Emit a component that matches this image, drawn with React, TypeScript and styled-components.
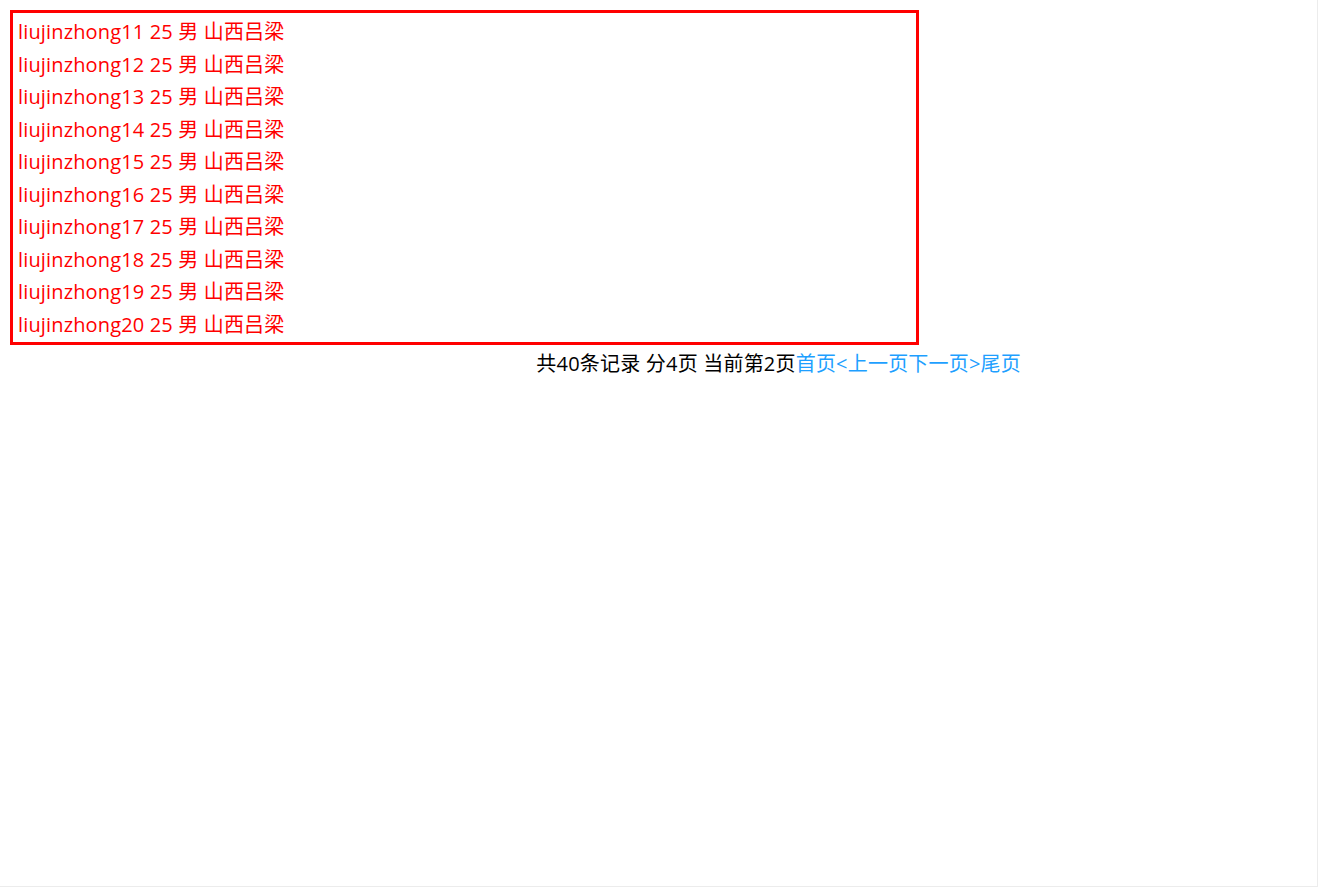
import React from "react";
import styled, { createGlobalStyle } from "styled-components";

const Global = createGlobalStyle`
  html, body { margin: 0; padding: 0; background: #fff; }
  body {
    padding: 10px;
    font-family: "Segoe UI", "Open Sans", "Noto Sans CJK SC", sans-serif;
    font-size: 20px;
  }
  body::after {
    content: "";
    position: fixed;
    top: 0; left: 0; width: 1317px; height: 886px;
    border-right: 1px solid #ececec;
    border-bottom: 1px solid #ececec;
    pointer-events: none;
  }
`;

const ListBox = styled.div`
  width: 898px;
  border: 3px solid #ff0000;
  padding: 3px 0 1px 5px;
  box-sizing: content-box;
`;

const Row = styled.div`
  color: #ff0000;
  height: 32.55px;
  line-height: 32.55px;
  white-space: nowrap;
  letter-spacing: 0.15px;
`;

const Pager = styled.div`
  width: 1011px;
  text-align: right;
  line-height: 37px;
  color: #000;
  white-space: nowrap;
  letter-spacing: 0.2px;
`;

const PageLink = styled.a`
  color: #1e9fff;
  text-decoration: none;
  cursor: pointer;
`;

const rows = Array.from({ length: 10 }, (_, i) => ({
  name: `liujinzhong${11 + i}`,
  age: 25,
  sex: "男",
  place: "山西吕梁",
}));

export default function App() {
  return (
    <>
      <Global />
      <ListBox>
        {rows.map((r) => (
          <Row key={r.name}>
            {r.name} {r.age} {r.sex} {r.place}
          </Row>
        ))}
      </ListBox>
      <Pager>
        共40条记录 分4页 当前第2页
        <PageLink>首页</PageLink>
        <PageLink>&lt;上一页</PageLink>
        <PageLink>下一页&gt;</PageLink>
        <PageLink>尾页</PageLink>
      </Pager>
    </>
  );
}
